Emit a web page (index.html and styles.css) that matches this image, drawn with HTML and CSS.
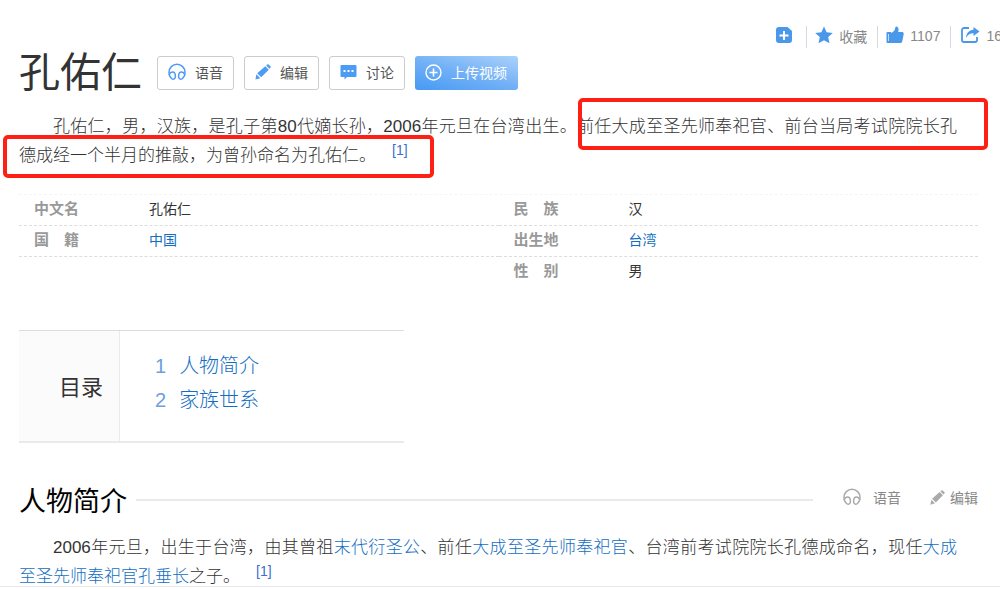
FILE: index.html
```html
<!DOCTYPE html>
<html lang="zh-CN">
<head>
<meta charset="utf-8">
<title>孔佑仁</title>
<meta name="viewport" content="width=device-width, initial-scale=1">
<link rel="stylesheet" href="styles.css">
</head>
<body>
<svg class="sprite" aria-hidden="true">
  <symbol id="headset" viewBox="0 0 18 18">
    <path d="M4 15.800C2 14.500 1 12 1 9.300a8 8 0 0 1 16 0c0 2.700-1 5.200-3 6.500" fill="none" stroke="currentColor" stroke-width="1.500"/>
    <path d="M4 15.800c1.800 1 3.400-.3 3.400-2.400 0-2.400-1.200-4.400-2.900-4.400-1.500 0-2.700 1.300-3.300 2.800M14 15.800c-1.800 1-3.400-.3-3.400-2.400 0-2.400 1.200-4.400 2.900-4.400 1.500 0 2.700 1.300 3.300 2.800" fill="none" stroke="currentColor" stroke-width="1.500"/>
  </symbol>
  <symbol id="pencil" viewBox="0 0 16 16">
    <path d="M11.200 1.500l1-1a1 1 0 0 1 1.400 0l1.800 1.800a1 1 0 0 1 0 1.400l-1 1zM10.300 2.200l3.500 3.500-7.600 7.600-4-4zM1.400 10.300l3.900 3.900-4.900 1.400z" fill="currentColor"/>
  </symbol>
</svg>

<nav class="toolbar" aria-label="页面操作">
  <button class="tool tool-add" type="button" aria-label="添加">
    <svg width="16" height="16" viewBox="0 0 16 16"><path d="M3 0h8.500L16 4v9a3 3 0 0 1-3 3H3a3 3 0 0 1-3-3V3a3 3 0 0 1 3-3z" fill="#4a98ea"/><path d="M8 4v9M3.500 8.500h9" stroke="#fff" stroke-width="2"/></svg>
  </button>
  <button class="tool tool-star" type="button">
    <svg width="18" height="18" viewBox="0 0 18 18"><path d="M9 .5l2.600 5.700 6.200.7-4.600 4.200 1.300 6.200L9 14.200l-5.500 3.100 1.300-6.200L.2 6.900l6.200-.7z" fill="#4a98ea"/></svg>
    <span>收藏</span>
  </button>
  <button class="tool tool-like" type="button">
    <svg width="18" height="18" viewBox="0 0 18 18"><path d="M1.500 6H5v11H1.500a1 1 0 0 1-1-1V7a1 1 0 0 1 1-1z" fill="#4a98ea"/><path d="M2.500 8v7" stroke="#c4dcf8"/><path d="M5 7c3-1.200 4-3 4.300-5.600C9.400.7 10 .3 10.700.4c1.800.4 2.400 2.800 1.500 5.600h4c1.200 0 1.700 1 1.500 2l-1.400 7.300c-.2 1-.8 1.700-1.800 1.700H5z" fill="#4a98ea"/></svg>
    <span>1107</span>
  </button>
  <button class="tool tool-share" type="button">
    <svg width="19" height="18" viewBox="0 0 19 18"><path d="M8 2H3a2 2 0 0 0-2 2v10a2 2 0 0 0 2 2h11a2 2 0 0 0 2-2v-3" fill="none" stroke="#4a98ea" stroke-width="1.800"/><path d="M12.500 1l6 4.500-6 4.500V7.300C9.500 7.200 7 8.500 5 12c.3-5 3-8 7.500-8.300z" fill="#4a98ea"/></svg>
    <span>16</span>
  </button>
</nav>

<main class="article">
  <header class="title-row">
    <h1 class="title">孔佑仁</h1>
    <div class="actions">
      <button class="btn" type="button"><svg class="icon" width="18" height="18"><use href="#headset"/></svg>语音</button>
      <button class="btn" type="button"><svg class="icon" width="16" height="16"><use href="#pencil"/></svg>编辑</button>
      <button class="btn" type="button"><svg class="icon" width="17" height="16" viewBox="0 0 17 16"><path d="M1.500 1h14a1 1 0 0 1 1 1v10a1 1 0 0 1-1 1H7l-2.500 2.500V13h-3a1 1 0 0 1-1-1V2a1 1 0 0 1 1-1z" fill="currentColor"/><path d="M3.500 7h2M7.500 7h2M11.500 7h2" stroke="#fff" stroke-width="2"/></svg>讨论</button>
      <button class="btn btn-primary" type="button"><svg class="icon" width="17" height="17" viewBox="0 0 17 17"><circle cx="8.500" cy="8.500" r="7.500" fill="none" stroke="#fff" stroke-width="1.400"/><path d="M8.500 4.500v8M4.500 8.500h8" stroke="#fff" stroke-width="1.600"/></svg>上传视频</button>
    </div>
  </header>

  <section class="intro">
    <p class="para">孔佑仁，男，汉族，是孔子第80代嫡长孙，2006年元旦在台湾出生。前任大成至圣先师奉祀官、前台当局考试院院长孔德成经一个半月的推敲，为曾孙命名为孔佑仁。<a class="ref" href="#ref1">[1]</a></p>
    <span class="mark mark-first"></span>
    <span class="mark mark-second"></span>
  </section>

  <section class="info">
    <dl class="info-col">
      <div class="info-row"><dt>中文名</dt><dd>孔佑仁</dd></div>
      <div class="info-row"><dt>国　籍</dt><dd><a href="#china">中国</a></dd></div>
    </dl>
    <dl class="info-col">
      <div class="info-row"><dt>民　族</dt><dd>汉</dd></div>
      <div class="info-row"><dt>出生地</dt><dd><a href="#taiwan">台湾</a></dd></div>
      <div class="info-row info-last"><dt>性　别</dt><dd>男</dd></div>
    </dl>
  </section>

  <nav class="toc" aria-labelledby="toc-title">
    <h2 class="toc-title" id="toc-title">目录</h2>
    <ol class="toc-list">
      <li><span class="toc-num">1</span><a href="#profile">人物简介</a></li>
      <li><span class="toc-num">2</span><a href="#family">家族世系</a></li>
    </ol>
  </nav>

  <section id="profile">
    <header class="section-head">
      <h2 class="section-title">人物简介</h2>
      <span class="rule"></span>
      <button class="section-tool tool-voice" type="button"><svg width="18" height="18"><use href="#headset"/></svg><span>语音</span></button>
      <button class="section-tool tool-edit" type="button"><svg width="15" height="15"><use href="#pencil"/></svg><span>编辑</span></button>
    </header>
    <p class="para">2006年元旦，出生于台湾，由其曾祖<a href="#yansheng">末代衍圣公</a>、前任<a href="#fengsi">大成至圣先师奉祀官</a>、台湾前考试院院长孔德成命名，现任<a href="#fengsi">大成至圣先师奉祀官</a><a href="#kong">孔垂长</a>之子。<a class="ref" href="#ref1">[1]</a></p>
  </section>
</main>
<hr class="page-end">
</body>
</html>
```

FILE: styles.css
```css
* {
  box-sizing: border-box;
}

body {
  margin: 0;
  overflow: hidden;
  background: #fff;
  color: #333;
  font-family: "Liberation Sans", "Noto Sans CJK SC", sans-serif;
  font-size: 14px;
}

h1, h2, p, dl, dd, ol {
  margin: 0;
  padding: 0;
  font-weight: 400;
}

a {
  color: #136ec2;
  text-decoration: none;
}

button {
  margin: 0;
  padding: 0;
  border: 0;
  background: none;
  font: inherit;
  white-space: nowrap;
  cursor: pointer;
}

.sprite {
  position: absolute;
  width: 0;
  height: 0;
}

.toolbar {
  display: flex;
  justify-content: flex-end;
  margin-right: -2px;
  padding-top: 26px;
}

.tool {
  display: flex;
  align-items: center;
  height: 22px;
  color: #888;
}

.tool svg {
  flex: none;
  margin-bottom: 5px;
}

.tool + .tool {
  margin-left: 10px;
  padding-left: 8px;
  border-left: 1px solid #d5dae2;
}

.tool span {
  margin-left: 6px;
  padding-bottom: 3px;
}

.tool.tool-add {
  margin-right: 4px;
}

.tool.tool-share {
  padding-left: 10px;
}

.article {
  padding: 0 22px 0 19px;
}

.title-row {
  display: flex;
  align-items: center;
  gap: 15px;
  height: 50px;
}

.title {
  font-size: 41px;
  line-height: 48px;
}

.actions {
  display: flex;
  gap: 10px;
}

.btn {
  display: flex;
  align-items: center;
  gap: 9px;
  height: 34px;
  padding: 0 10px 2px;
  border: 1px solid #ccc;
  border-radius: 3px;
  background: #fff;
  color: #555;
}

.icon {
  color: #4c9cf5;
}

.btn-primary {
  border: 0;
  padding: 0 11px 2px 10px;
  background: linear-gradient(15deg, #4699f5, #73b1f6 50%, #abd2fb);
  color: #fff;
}

.intro {
  position: relative;
  margin-top: 14px;
}

.para {
  padding-right: 21px;
  font-size: 17px;
  font-weight: 300;
  line-height: 29px;
  text-align: justify;
  text-indent: 34px;
}

.ref {
  margin-left: 16px;
  color: #3b6fd0;
  font-size: 14px;
  line-height: 1;
  vertical-align: 6px;
}

.mark {
  position: absolute;
  border: 4px solid #ff2015;
  border-radius: 5px;
}

.mark-first {
  top: -14px;
  right: -10px;
  width: 410px;
  height: 52px;
}

.mark-second {
  top: 23px;
  left: -16px;
  width: 431px;
  height: 43px;
}

.info {
  display: grid;
  grid-template-columns: 1fr 1fr;
  margin-top: 24px;
  border-top: 1px dashed #f5f5f5;
}

.info-row {
  display: grid;
  grid-template-columns: 115px 1fr;
  padding: 0 0 2px 15px;
  border-bottom: 1px dashed #ddd;
  line-height: 28px;
}

.info-last {
  border-bottom: 0;
}

.info dt {
  color: #999;
  font-size: 15px;
  font-weight: 700;
}

.toc {
  display: grid;
  grid-template-columns: 101px 1fr;
  max-width: 385px;
  margin-top: 43px;
  border-top: 1px solid #ddd;
  border-bottom: 2px solid #eaeaea;
}

.toc-title {
  display: flex;
  align-items: center;
  justify-content: flex-end;
  padding: 0 16px 3px 0;
  border-right: 1px solid #eaeaea;
  background: #fbfbfb;
  font-size: 22px;
}

.toc-list {
  padding: 18px 0 24px 35px;
  list-style: none;
  font-size: 20px;
  font-weight: 300;
  line-height: 34px;
}

.toc-list li {
  display: flex;
  gap: 13px;
}

.toc-num {
  color: #6c9fe0;
}

.section-head {
  display: flex;
  align-items: center;
  height: 40px;
  margin-top: 37px;
}

.section-title {
  padding-top: 3px;
  color: #000;
  font-size: 27px;
  line-height: 40px;
}

.rule {
  flex: 1;
  height: 2px;
  margin: 0 30px 0 9px;
  background: #eaeaea;
}

.section-tool {
  display: flex;
  align-items: center;
  padding-bottom: 6px;
  color: #888;
}

.section-tool svg {
  color: #aaa;
}

.tool-voice {
  gap: 12px;
  margin-right: 29px;
}

.tool-edit {
  gap: 5px;
}

.section-head + .para {
  margin-top: 13px;
}

.page-end {
  position: relative;
  margin: -5px 0 0;
  border: 0;
  border-top: 1px solid #e8e8e8;
}
```
